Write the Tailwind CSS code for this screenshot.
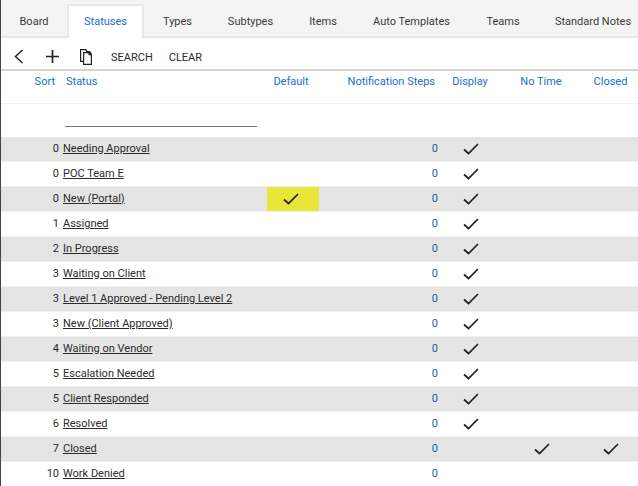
<!DOCTYPE html>
<html lang="en">
<head>
    <meta charset="UTF-8">
    <title>Statuses</title>
    <script src="https://cdn.jsdelivr.net/npm/@tailwindcss/browser@4"></script>
</head>
<body class="bg-white font-['Roboto',sans-serif] text-[11px] text-[#2b2b2b] overflow-hidden">
    <div class="w-[638px] h-[486px] overflow-hidden border-l border-[#444]">
        <!-- Tabs -->
        <nav class="h-[38px] bg-[#f4f4f4] border-b-2 border-[#e8e8e8] flex items-end text-[#3a3a3a]">
            <a class="w-[66px] h-[36px] shrink-0 flex items-center justify-center pt-[8px]">Board</a>
            <a class="w-[77px] h-[34px] shrink-0 mb-[-2px] flex items-center justify-center pt-[1px] bg-white border-2 border-b-0 border-[#e8e8e8] rounded-t-[2px] text-[#1a6fd0]">Statuses</a>
            <a class="w-[67px] h-[36px] shrink-0 flex items-center justify-center pt-[8px]">Types</a>
            <a class="w-[79px] h-[36px] shrink-0 flex items-center justify-center pt-[8px]">Subtypes</a>
            <a class="w-[66px] h-[36px] shrink-0 flex items-center justify-center pt-[8px]">Items</a>
            <a class="w-[111px] h-[36px] shrink-0 flex items-center justify-center pt-[8px]">Auto Templates</a>
            <a class="w-[72px] h-[36px] shrink-0 flex items-center justify-center pt-[8px]">Teams</a>
            <a class="w-[108px] h-[36px] shrink-0 flex items-center justify-center pt-[8px] whitespace-nowrap">Standard Notes</a>
        </nav>

        <!-- Toolbar -->
        <div class="h-[33px] border-b-2 border-[#d4d4d4] flex items-center pt-[6px]">
            <svg class="ml-[13px] w-[10px] h-[15px]" viewBox="0 0 10 15" fill="none" stroke="#222" stroke-width="1.500"><path d="M8.500 1 1.500 7.500l7 6.500"/></svg>
            <svg class="ml-[22px] w-[13px] h-[13px]" viewBox="0 0 13 13" fill="none" stroke="#222" stroke-width="1.700"><path d="M6.500 0v13M0 6.500h13"/></svg>
            <svg class="ml-[20px] w-[13px] h-[16px]" viewBox="0 0 13 16"><path fill="#222" d="M1 0h6l1.500 2H11l2 3v11H4v-3H1zM2.200 1.200v10.600H4V3h3.200L6.500 1.200zM5.200 4.200v10.600h6.600V6.200H9.500v-2z"/></svg>
            <span class="ml-[19px] mt-[3px]">SEARCH</span>
            <span class="ml-[16px] mt-[3px]">CLEAR</span>
        </div>

        <!-- Column headings -->
        <div class="h-[33px] border-b border-[#f0f0f0] grid grid-cols-[58px_208px_52px_123px_58px_84px_54px] pt-[3px] text-[#1a6fd0]">
            <div class="text-right pr-[4px]">Sort</div>
            <div class="pl-[7px]">Status</div>
            <div class="text-center pr-[4px]">Default</div>
            <div class="text-right pr-[7px] whitespace-nowrap">Notification Steps</div>
            <div class="text-center pr-[2px]">Display</div>
            <div class="text-center pr-[2px]">No Time</div>
            <div class="text-center pr-[1px]">Closed</div>
        </div>

        <!-- Filter input -->
        <div class="h-[33px] pl-[64px] flex items-start">
            <div class="w-[192px] h-[23px] border-b border-[#777]"></div>
        </div>

        <div id="linhas"></div>
    </div>

    <script>
    const check = '<svg class="w-[16px] h-[12px]" viewBox="0 0 16 12" fill="none" stroke="#222" stroke-width="1.700"><path d="M1 6.500 5.500 10.500 15 1"/></svg>';
    const statuses = [
        [0, 'Needing Approval', 0, 1, 0, 0],
        [0, 'POC Team E', 0, 1, 0, 0],
        [0, 'New (Portal)', 1, 1, 0, 0],
        [1, 'Assigned', 0, 1, 0, 0],
        [2, 'In Progress', 0, 1, 0, 0],
        [3, 'Waiting on Client', 0, 1, 0, 0],
        [3, 'Level 1 Approved - Pending Level 2', 0, 1, 0, 0],
        [3, 'New (Client Approved)', 0, 1, 0, 0],
        [4, 'Waiting on Vendor', 0, 1, 0, 0],
        [5, 'Escalation Needed', 0, 1, 0, 0],
        [5, 'Client Responded', 0, 1, 0, 0],
        [6, 'Resolved', 0, 1, 0, 0],
        [7, 'Closed', 0, 0, 1, 1],
        [10, 'Work Denied', 0, 0, 0, 0],
    ];
    document.getElementById('linhas').innerHTML = statuses.map((s, i) => `
        <div class="h-[25px] border-b border-[#f0f0f0] grid grid-cols-[58px_208px_52px_123px_58px_84px_54px] items-center ${i % 2 == 0 ? 'bg-[#e4e4e4]' : 'bg-white'}">
            <div class="text-right">${s[0]}</div>
            <div class="pl-[4px]"><a class="underline">${s[1]}</a></div>
            <div class="h-full flex items-center justify-center pr-[4px] ${s[2] ? 'bg-[#e8e63a]' : ''}">${s[2] ? check : ''}</div>
            <div class="text-right pr-[4px] text-[#1a5fb0]">0</div>
            <div class="flex justify-center">${s[3] ? check : ''}</div>
            <div class="flex justify-center">${s[4] ? check : ''}</div>
            <div class="flex justify-center">${s[5] ? check : ''}</div>
        </div>`).join('');
    </script>
</body>
</html>
